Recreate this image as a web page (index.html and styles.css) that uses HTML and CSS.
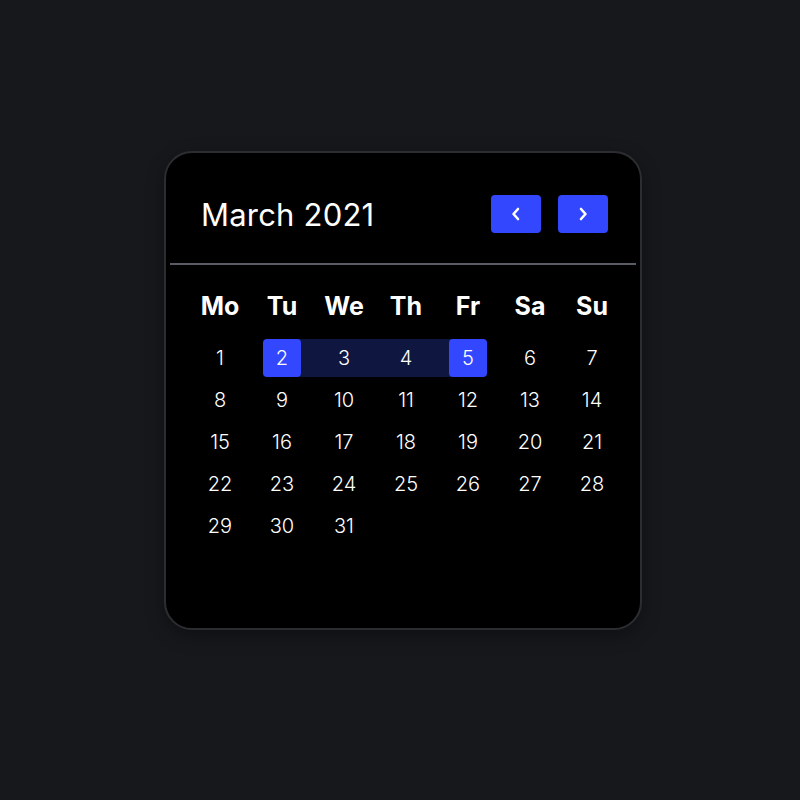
FILE: index.html
```html
<!DOCTYPE html>
<html lang="en">
<head>
  <meta charset="UTF-8" />
  <meta name="viewport" content="width=device-width, initial-scale=1" />
  <title>Calendar - March 2021</title>
  <link rel="stylesheet" href="styles.css">
</head>
<body>
  <div class="calendar">
    <!-- Month title & navigation -->
    <div class="cal-header">
      <h2 class="cal-title">March 2021</h2>
      <div class="cal-nav">
        <button class="nav-btn" aria-label="Previous month">
          <svg width="14" height="16" viewBox="0 0 14 16"><polyline points="9,3 4.5,8 9,13" /></svg>
        </button>
        <button class="nav-btn" aria-label="Next month">
          <svg width="14" height="16" viewBox="0 0 14 16"><polyline points="5,3 9.5,8 5,13" /></svg>
        </button>
      </div>
    </div>

    <div class="divider"></div>

    <!-- Day grid -->
    <div class="cal-grid">
      <div class="weekday">Mo</div>
      <div class="weekday">Tu</div>
      <div class="weekday">We</div>
      <div class="weekday">Th</div>
      <div class="weekday">Fr</div>
      <div class="weekday">Sa</div>
      <div class="weekday">Su</div>

      <div class="day"><span class="num">1</span></div>
      <div class="day range-start"><span class="num selected">2</span></div>
      <div class="day in-range"><span class="num">3</span></div>
      <div class="day in-range"><span class="num">4</span></div>
      <div class="day range-end"><span class="num selected">5</span></div>
      <div class="day"><span class="num">6</span></div>
      <div class="day"><span class="num">7</span></div>

      <div class="day"><span class="num">8</span></div>
      <div class="day"><span class="num">9</span></div>
      <div class="day"><span class="num">10</span></div>
      <div class="day"><span class="num">11</span></div>
      <div class="day"><span class="num">12</span></div>
      <div class="day"><span class="num">13</span></div>
      <div class="day"><span class="num">14</span></div>

      <div class="day"><span class="num">15</span></div>
      <div class="day"><span class="num">16</span></div>
      <div class="day"><span class="num">17</span></div>
      <div class="day"><span class="num">18</span></div>
      <div class="day"><span class="num">19</span></div>
      <div class="day"><span class="num">20</span></div>
      <div class="day"><span class="num">21</span></div>

      <div class="day"><span class="num">22</span></div>
      <div class="day"><span class="num">23</span></div>
      <div class="day"><span class="num">24</span></div>
      <div class="day"><span class="num">25</span></div>
      <div class="day"><span class="num">26</span></div>
      <div class="day"><span class="num">27</span></div>
      <div class="day"><span class="num">28</span></div>

      <div class="day"><span class="num">29</span></div>
      <div class="day"><span class="num">30</span></div>
      <div class="day"><span class="num">31</span></div>
    </div>
  </div>
</body>
</html>
```

FILE: styles.css
```css
body { margin: 0; background: #17181c; font-family: 'Inter', 'Noto Sans', sans-serif; color: #fff; min-height: 800px; }

.calendar {
  box-sizing: border-box;
  width: 478px;
  height: 479px;
  margin: 151px 0 0 164px;
  background: #000;
  border: 2px solid #2c2d31;
  border-radius: 28px;
  box-shadow: 0 6px 18px rgba(0, 0, 0, 0.35);
}

.cal-header {
  display: flex;
  justify-content: space-between;
  align-items: center;
  padding: 42px 32px 30px 35px;
}

.cal-title {
  margin: 0;
  font-size: 31px;
  font-weight: 400;
  letter-spacing: 0.2px;
}

.cal-nav {
  display: flex;
  gap: 17px;
}

.nav-btn {
  width: 50px;
  height: 38px;
  border: none;
  border-radius: 4px;
  background: #3347ff;
  display: flex;
  align-items: center;
  justify-content: center;
  padding: 0;
  cursor: pointer;
}

.nav-btn polyline {
  fill: none;
  stroke: #fff;
  stroke-width: 2.6;
  stroke-linecap: round;
  stroke-linejoin: round;
}

.divider {
  height: 2px;
  margin: 0 4px;
  background: #5a5c66;
}

.cal-grid {
  display: grid;
  grid-template-columns: repeat(7, 62px);
  grid-template-rows: 52px;
  grid-auto-rows: 42px;
  padding: 20px 0 0 23px;
}

.weekday {
  height: 42px;
  display: flex;
  align-items: center;
  justify-content: center;
  font-size: 25px;
  font-weight: 700;
}

.day {
  display: flex;
  align-items: center;
  justify-content: center;
  padding: 2px 0;
  box-sizing: border-box;
  background-clip: content-box;
}

.day.in-range { background-color: #0f1640; }
.day.range-start { background-image: linear-gradient(to right, transparent 50%, #0f1640 50%); }
.day.range-end { background-image: linear-gradient(to right, #0f1640 50%, transparent 50%); }

.num {
  width: 38px;
  height: 38px;
  display: flex;
  align-items: center;
  justify-content: center;
  font-size: 20px;
  font-weight: 300;
  border-radius: 4px;
}

.num.selected {
  background: #3347ff;
}
```
